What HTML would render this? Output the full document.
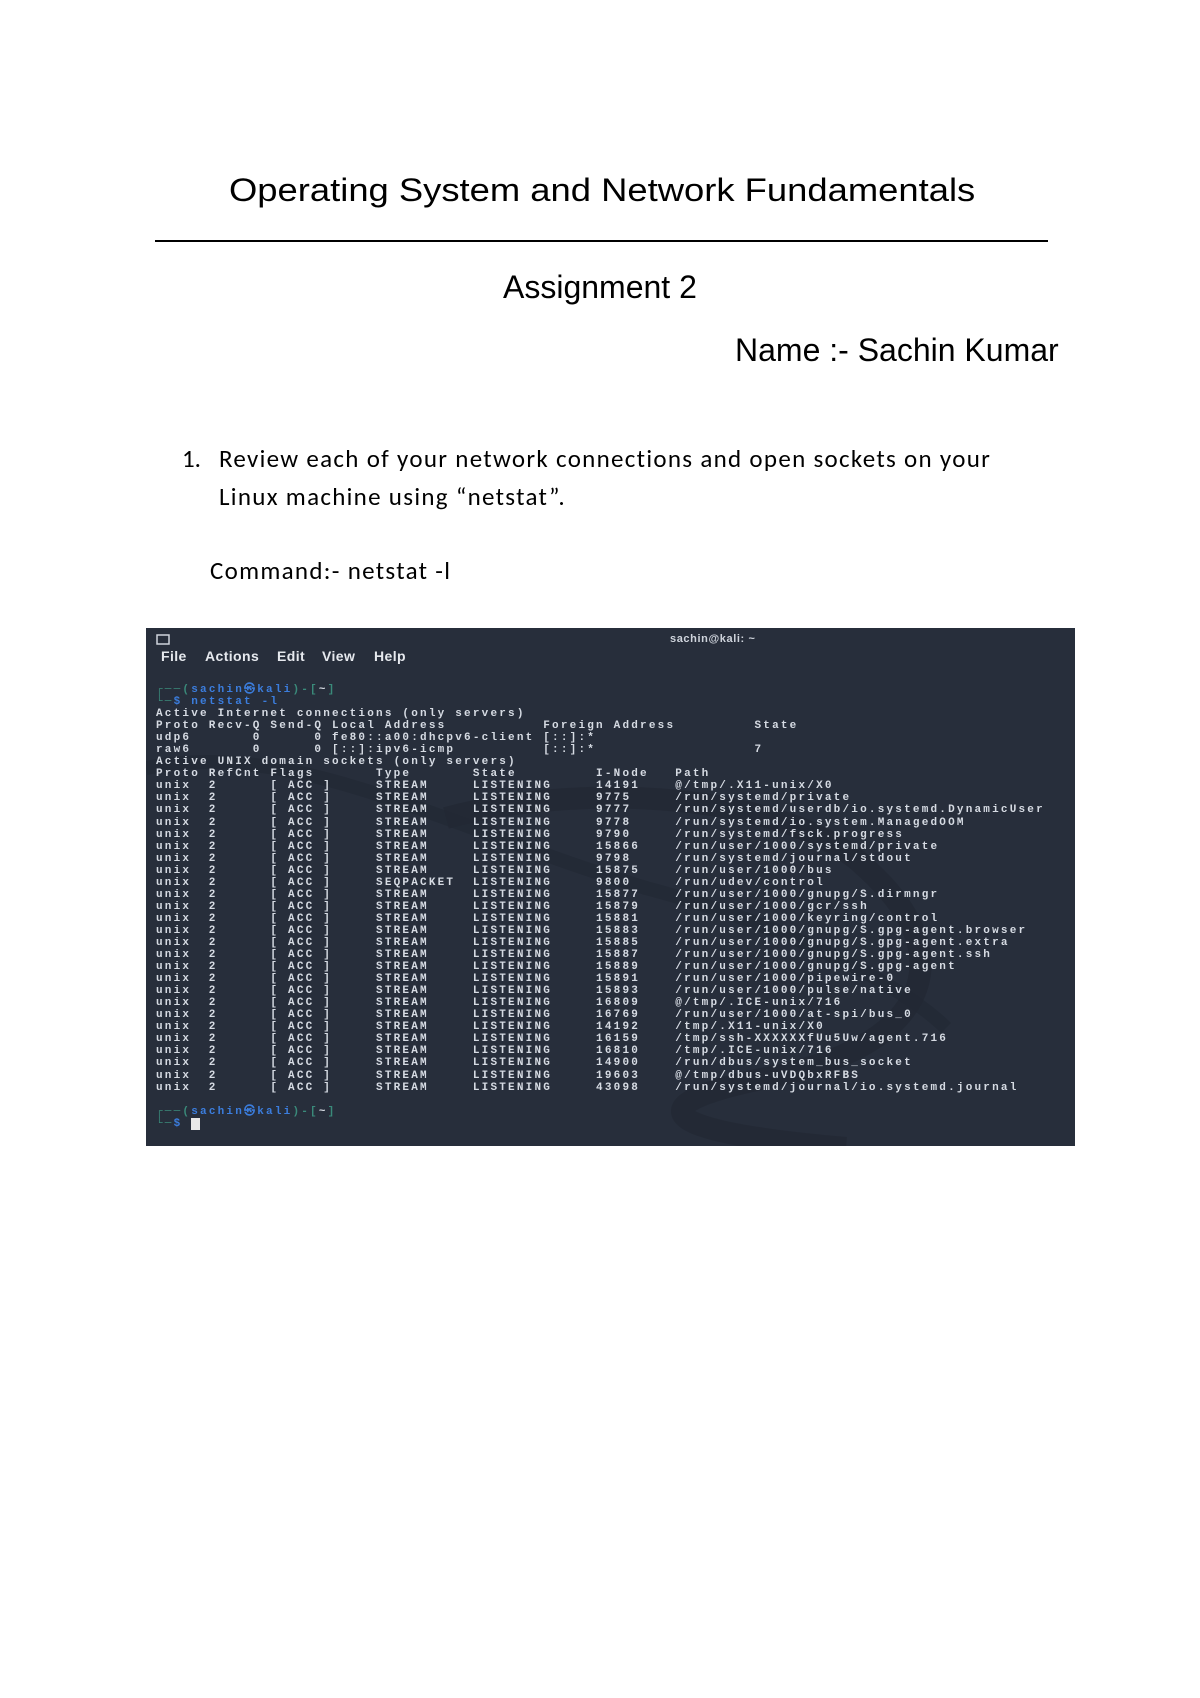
<!DOCTYPE html>
<html><head><meta charset="utf-8"><style>
html,body{margin:0;padding:0;background:#fff;}
body{width:1200px;height:1698px;position:relative;overflow:hidden;font-family:"Liberation Sans",Arial,sans-serif;color:#000;}
.a{position:absolute;white-space:nowrap;line-height:1;}
.t{font-size:32px;}
.c{font-family:"Carlito","Liberation Sans",sans-serif;font-size:25px;letter-spacing:1.3px;}
#term{position:absolute;left:146px;top:628px;width:929px;height:518px;background:#272e3b;overflow:hidden;}
#term pre{position:absolute;left:10px;top:56px;margin:0;font-family:"Liberation Mono","DejaVu Sans Mono",monospace;font-size:11px;line-height:12.05px;letter-spacing:2.2px;color:#d6dbe3;font-weight:bold;}
.b{color:#3b7ddd}.g{color:#3a8a7a}
.m{position:absolute;top:20px;font-size:14px;font-weight:bold;color:#e6e9ee;letter-spacing:0.4px}
</style></head><body>
<div class="a t" style="left:229px;top:174px;transform:scaleX(1.137);transform-origin:0 0;">Operating System and Network Fundamentals</div>
<div style="position:absolute;left:155px;top:240px;width:893px;height:2px;background:#000"></div>
<div class="a t" style="left:503px;top:271px;">Assignment 2</div>
<div class="a t" style="left:735px;top:334px;">Name :- Sachin Kumar</div>
<div class="a c" style="left:182px;top:446px;letter-spacing:0">1.</div>
<div class="a c" style="left:219px;top:446px;">Review each of your network connections and open sockets on your</div>
<div class="a c" style="left:219px;top:484px;">Linux machine using “netstat”.</div>
<div class="a c" style="left:210px;top:558px;">Command:- netstat -l</div>
<div id="term">
<svg style="position:absolute;left:0;top:0" width="931" height="518">
<path d="M300 190 C450 150 650 170 720 240 C820 330 780 420 620 450 C520 470 470 500 700 520" stroke="#222833" stroke-width="22" fill="none" opacity="0.7"/>
<path d="M0 140 C150 110 300 200 500 260 C650 300 760 360 800 400" stroke="#222833" stroke-width="14" fill="none" opacity="0.6"/>
<rect x="11" y="7" width="12" height="9" fill="none" stroke="#cfd4dc" stroke-width="1.5"/>
</svg>
<div class="a" style="left:524px;top:6px;font-size:11px;color:#cfd4dc;font-weight:bold;letter-spacing:0.6px">sachin@kali: ~</div>
<div class="m" style="left:15px">File</div>
<div class="m" style="left:59px">Actions</div>
<div class="m" style="left:131px">Edit</div>
<div class="m" style="left:176px">View</div>
<div class="m" style="left:228px">Help</div>
<pre><span class="g">┌──(</span><span class="b">sachin㉿kali</span><span class="g">)-[</span>~<span class="g">]</span>
<span class="g">└─</span><span class="b">$ netstat -l</span>
Active Internet connections (only servers)
Proto Recv-Q Send-Q Local Address           Foreign Address         State
udp6       0      0 fe80::a00:dhcpv6-client [::]:*
raw6       0      0 [::]:ipv6-icmp          [::]:*                  7
Active UNIX domain sockets (only servers)
Proto RefCnt Flags       Type       State         I-Node   Path
unix  2      [ ACC ]     STREAM     LISTENING     14191    @/tmp/.X11-unix/X0
unix  2      [ ACC ]     STREAM     LISTENING     9775     /run/systemd/private
unix  2      [ ACC ]     STREAM     LISTENING     9777     /run/systemd/userdb/io.systemd.DynamicUser
unix  2      [ ACC ]     STREAM     LISTENING     9778     /run/systemd/io.system.ManagedOOM
unix  2      [ ACC ]     STREAM     LISTENING     9790     /run/systemd/fsck.progress
unix  2      [ ACC ]     STREAM     LISTENING     15866    /run/user/1000/systemd/private
unix  2      [ ACC ]     STREAM     LISTENING     9798     /run/systemd/journal/stdout
unix  2      [ ACC ]     STREAM     LISTENING     15875    /run/user/1000/bus
unix  2      [ ACC ]     SEQPACKET  LISTENING     9800     /run/udev/control
unix  2      [ ACC ]     STREAM     LISTENING     15877    /run/user/1000/gnupg/S.dirmngr
unix  2      [ ACC ]     STREAM     LISTENING     15879    /run/user/1000/gcr/ssh
unix  2      [ ACC ]     STREAM     LISTENING     15881    /run/user/1000/keyring/control
unix  2      [ ACC ]     STREAM     LISTENING     15883    /run/user/1000/gnupg/S.gpg-agent.browser
unix  2      [ ACC ]     STREAM     LISTENING     15885    /run/user/1000/gnupg/S.gpg-agent.extra
unix  2      [ ACC ]     STREAM     LISTENING     15887    /run/user/1000/gnupg/S.gpg-agent.ssh
unix  2      [ ACC ]     STREAM     LISTENING     15889    /run/user/1000/gnupg/S.gpg-agent
unix  2      [ ACC ]     STREAM     LISTENING     15891    /run/user/1000/pipewire-0
unix  2      [ ACC ]     STREAM     LISTENING     15893    /run/user/1000/pulse/native
unix  2      [ ACC ]     STREAM     LISTENING     16809    @/tmp/.ICE-unix/716
unix  2      [ ACC ]     STREAM     LISTENING     16769    /run/user/1000/at-spi/bus_0
unix  2      [ ACC ]     STREAM     LISTENING     14192    /tmp/.X11-unix/X0
unix  2      [ ACC ]     STREAM     LISTENING     16159    /tmp/ssh-XXXXXXfUu5Uw/agent.716
unix  2      [ ACC ]     STREAM     LISTENING     16810    /tmp/.ICE-unix/716
unix  2      [ ACC ]     STREAM     LISTENING     14900    /run/dbus/system_bus_socket
unix  2      [ ACC ]     STREAM     LISTENING     19603    @/tmp/dbus-uVDQbxRFBS
unix  2      [ ACC ]     STREAM     LISTENING     43098    /run/systemd/journal/io.systemd.journal

<span class="g">┌──(</span><span class="b">sachin㉿kali</span><span class="g">)-[</span>~<span class="g">]</span>
<span class="g">└─</span><span class="b">$</span> <span style="background:#e8e8e8">&nbsp;</span></pre>
</div>
</body></html>
